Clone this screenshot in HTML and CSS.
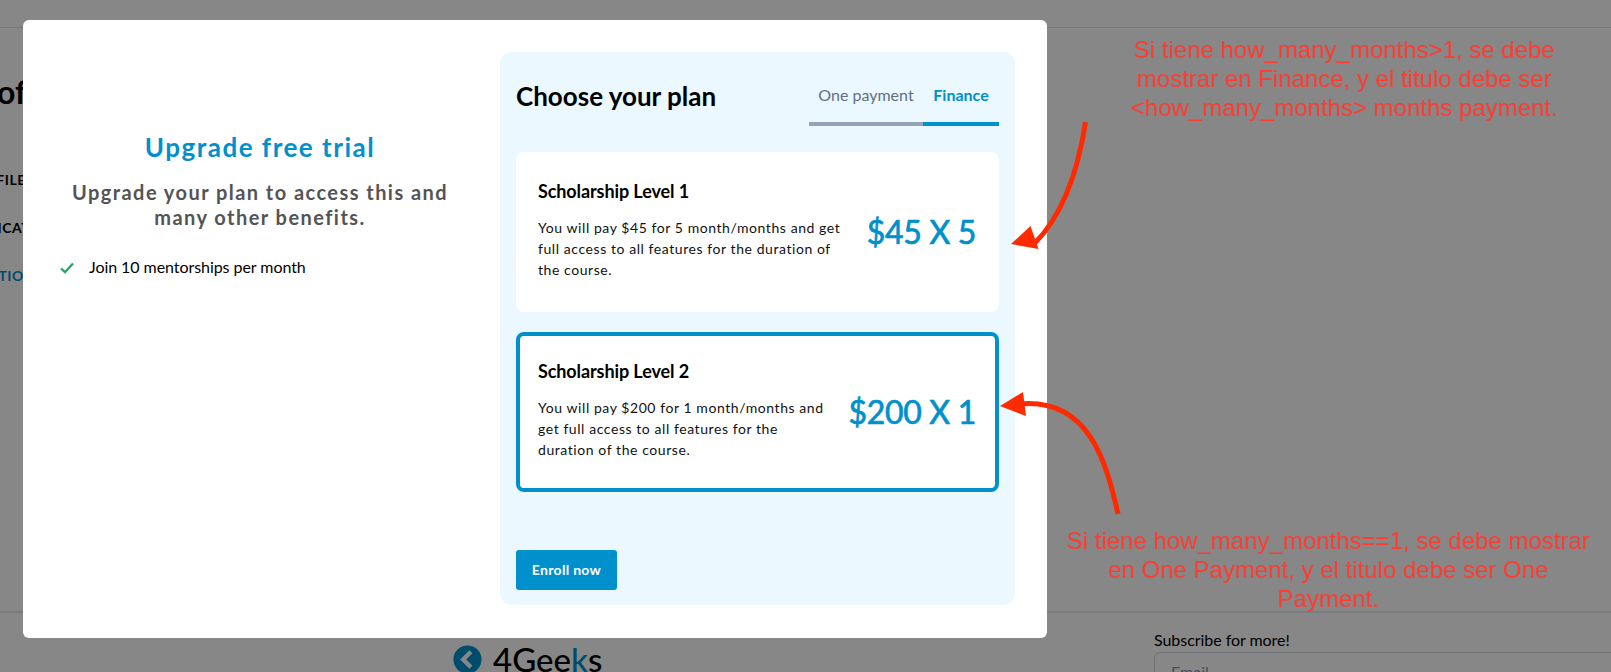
FILE: index.html
```html
<!DOCTYPE html>
<html lang="en">
<head>
<meta charset="utf-8">
<title>Upgrade free trial</title>
<link rel="stylesheet" href="styles.css">
</head>
<body>
<div class="page">
  <header class="topbar"></header>
  <main class="main">
    <h1 class="page-title">Profile</h1>
    <nav class="side-nav">
      <a class="side-link">PROFILE</a>
      <a class="side-link">CERTIFICATES</a>
      <a class="side-link side-link-active">NOTIFICATIONS</a>
    </nav>
  </main>
  <footer class="footer">
    <div class="logo">
      <svg class="logo-mark" viewBox="0 0 30 30" aria-hidden="true">
        <circle cx="15" cy="15" r="14.5" fill="#0090cc"/>
        <path d="M18.5 7 L10.5 15 L18.5 23" fill="none" stroke="#fff" stroke-width="4.5"/>
      </svg>
      <span class="logo-text">4Gee<span class="logo-k">k</span>s</span>
    </div>
    <div class="subscribe">
      <p class="subscribe-label">Subscribe for more!</p>
      <div class="subscribe-input">Email</div>
    </div>
  </footer>
</div>

<div class="overlay">
  <section class="modal">
    <div class="intro">
      <h2 class="intro-title">Upgrade free trial</h2>
      <p class="intro-sub">Upgrade your plan to access this and many other benefits.</p>
      <ul class="benefits">
        <li class="benefit">
          <svg class="check" viewBox="0 0 14 12" aria-hidden="true"><path d="M1 6.5 L5 10.2 L13 1.5" fill="none" stroke="#25a55f" stroke-width="2.3"/></svg>
          <span>Join 10 mentorships per month</span>
        </li>
      </ul>
    </div>
    <div class="plans">
      <div class="plans-head">
        <h3 class="plans-title">Choose your plan</h3>
        <div class="tabs">
          <div class="tab tab-one">One payment</div>
          <div class="tab tab-finance">Finance</div>
        </div>
      </div>
      <article class="plan">
        <div class="plan-body">
          <h4 class="plan-name">Scholarship Level 1</h4>
          <p class="plan-desc">You will pay $45 for 5 month/months and get full access to all features for the duration of the course.</p>
        </div>
        <div class="plan-price">$45 X 5</div>
      </article>
      <article class="plan plan-selected">
        <div class="plan-body">
          <h4 class="plan-name">Scholarship Level 2</h4>
          <p class="plan-desc">You will pay $200 for 1 month/months and get full access to all features for the duration of the course.</p>
        </div>
        <div class="plan-price">$200 X 1</div>
      </article>
      <button class="enroll" type="button">Enroll now</button>
    </div>
  </section>
</div>

<svg class="arrows" viewBox="0 0 1611 672" aria-hidden="true">
  <path class="arrow-line" d="M1085.500 122 C1079 165 1066 212 1034 244"/>
  <path class="arrow-head" d="M1011 244 L1030.500 226 L1038.500 249 Z"/>
  <path class="arrow-line" d="M1118 514 C1106 460 1088 398 1020 404"/>
  <path class="arrow-head" d="M1000 406 L1023 392 L1026 416 Z"/>
</svg>
<p class="note note-top">Si tiene how_many_months&gt;1, se debe mostrar en Finance, y el titulo debe ser &lt;how_many_months&gt; months payment.</p>
<p class="note note-bottom">Si tiene how_many_months==1, se debe mostrar en One Payment, y el titulo debe ser One Payment.</p>
</body>
</html>
```
FILE: styles.css
```css
* { box-sizing: border-box; }
html, body { margin: 0; padding: 0; height: 672px; overflow: hidden; }
body { background: #fff; font-family: Lato, "Liberation Sans", sans-serif; color: #000; }
h1, h2, h3, h4, p, ul { margin: 0; padding: 0; }

.page { display: flex; flex-direction: column; height: 672px; overflow: hidden; }
.topbar { height: 28px; flex: none; border-bottom: 1px solid #e2e2e2; }
.main { height: 583px; flex: none; padding-top: 45px; }
.page-title { font-size: 32px; line-height: 38px; font-weight: 700; white-space: nowrap; margin-left: -34px; }
.side-nav { display: flex; flex-direction: column; gap: 30px; margin-top: 60px; }
.side-link { font-size: 14px; line-height: 18px; font-weight: 700; letter-spacing: .5px; white-space: nowrap; }
.side-link-active { color: #0090cc; }
.side-link:nth-child(1) { margin-left: -34px; }
.side-link:nth-child(2) { margin-left: -52px; }
.side-link:nth-child(3) { margin-left: -70px; }

.footer { flex: 1; border-top: 2px solid #e6e6f0; display: flex; padding: 7px 0 0 453px; }
.logo { display: flex; align-items: flex-start; gap: 11px; padding-top: 25px; width: 701px; }
.logo-mark { width: 29px; height: 29px; flex: none; }
.logo-text { font-size: 33px; line-height: 29px; font-weight: 500; }
.logo-k { color: #0090cc; }
.subscribe { flex: 1; margin-right: -40px; padding-top: 10px; }
.subscribe-label { font-size: 16px; line-height: 20px; letter-spacing: -.05px; }
.subscribe-input { margin-top: 2px; height: 44px; border: 1px solid #cfd5dd; border-radius: 6px; padding: 9px 16px; font-size: 16px; color: #8a94a3; }

.overlay { position: fixed; inset: 0; background: rgba(0, 0, 0, .47); padding: 20px 0 0 23px; }
.modal { width: 1024px; height: 618px; background: #fff; border-radius: 6px; display: flex; padding: 32px 32px 33px 0; }
.intro { width: 477px; flex: none; padding: 79px 0 0 37px; }
.intro-title { font-size: 26px; line-height: 32px; font-weight: 700; letter-spacing: 1.500px; color: #0090cc; text-align: center; width: 400px; }
.intro-sub { font-size: 20px; line-height: 25px; font-weight: 700; letter-spacing: 1.450px; color: #545454; text-align: center; width: 400px; margin-top: 17px; }
.benefits { list-style: none; margin-top: 27px; }
.benefit { display: flex; align-items: center; gap: 15px; font-size: 16px; line-height: 20px; letter-spacing: -.06px; }
.check { width: 14px; height: 12px; flex: none; margin-top: 2px; }

.plans { flex: 1; background: #ebf8ff; border-radius: 12px; padding: 16px; display: flex; flex-direction: column; }
.plans-head { display: flex; justify-content: space-between; height: 84px; flex: none; }
.plans-title { font-size: 26px; line-height: 32px; font-weight: 700; margin-top: 12px; }
.tabs { display: flex; height: 58px; padding-top: 15px; align-items: stretch; }
.tab { font-size: 16px; line-height: 24px; text-align: center; border-bottom: 4px solid; height: 43px; }
.tab-one { width: 114px; color: #606f85; border-color: #94a3b8; }
.tab-finance { width: 76px; color: #0090cc; border-color: #0090cc; font-weight: 700; }

.plan { height: 160px; flex: none; background: #fff; border-radius: 8px; display: flex; align-items: center; justify-content: space-between; padding: 0 23px 0 22px; }
.plan + .plan { margin-top: 20px; }
.plan-selected { border: 4px solid #0090cc; padding: 0 19px 0 18px; }
.plan-body { flex: 1; min-width: 0; margin-top: -5px; }
.plan-name { font-size: 18px; line-height: 24px; font-weight: 700; letter-spacing: -.1px; }
.plan-desc { font-size: 14px; line-height: 21px; letter-spacing: .57px; margin-top: 14px; color: #111; max-width: 304px; }
.plan-selected .plan-desc { max-width: 292px; }
.plan-price { font-size: 32px; line-height: 40px; font-weight: 400; -webkit-text-stroke: .7px #0090cc; color: #0090cc; white-space: nowrap; letter-spacing: -.3px; }

.enroll { flex: none; margin-top: 58px; width: 101px; height: 40px; border: 0; border-radius: 3px; background: #0090cc; color: #fff; font: 700 14px Lato, sans-serif; letter-spacing: .3px; padding: 0 0 2px; }

.arrows { position: absolute; left: 0; top: 0; width: 1611px; height: 672px; }
.arrow-line { fill: none; stroke: #ff2a00; stroke-width: 5; }
.arrow-head { fill: #ff2a00; }
.note { position: absolute; font-family: "Liberation Sans", Arial, sans-serif; font-size: 24px; line-height: 29px; color: #ff3b30; text-align: center; }
.note-top { left: 1124px; top: 35px; width: 440px; }
.note-bottom { left: 1058px; top: 526px; width: 540px; }
```
